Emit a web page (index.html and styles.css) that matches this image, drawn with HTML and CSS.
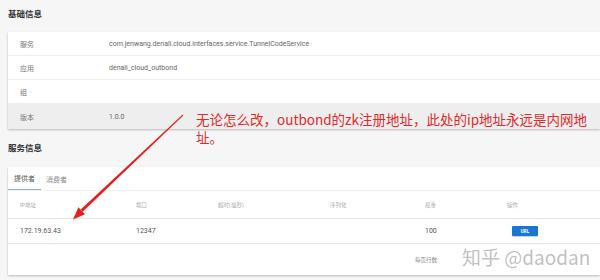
FILE: index.html
```html
<!DOCTYPE html>
<html lang="zh">
<head>
  <meta charset="UTF-8" />
  <title>服务详情</title>
  <link rel="stylesheet" href="styles.css">
</head>
<body>
  <div class="page">
    <h2 class="section-title">基础信息</h2>
    <section class="card info-card">
      <div class="info-row"><span class="info-label">服务</span><span>com.jenwang.denali.cloud.interfaces.service.TunnelCodeService</span></div>
      <div class="info-row"><span class="info-label">应用</span><span>denali_cloud_outbond</span></div>
      <div class="info-row"><span class="info-label">组</span><span></span></div>
      <div class="info-row is-active"><span class="info-label">版本</span><span>1.0.0</span></div>
    </section>

    <h2 class="section-title second">服务信息</h2>
    <section class="card service-card">
      <div class="tabs">
        <span class="tab is-current">提供者</span>
        <span class="tab">消费者</span>
      </div>
      <div class="grid-row head">
        <span>IP地址</span><span>端口</span><span>超时(毫秒)</span><span>序列化</span><span>权重</span><span>操作</span>
      </div>
      <div class="grid-row body">
        <span>172.19.63.43</span><span>12347</span><span></span><span></span><span>100</span><span><button class="btn-url">URL</button></span>
      </div>
      <div class="pager">每页行数:</div>
    </section>
  </div>

  <!-- annotation drawn over the screenshot -->
  <div class="note">无论怎么改，outbond的zk注册地址，此处的ip地址永远是内网地<br>址。</div>
  <svg class="arrow" width="600" height="280" viewBox="0 0 600 280">
    <polygon points="182.7,114.6 183.3,115.4 82.7,211.8 80.7,209.6" fill="#e3211c"/>
    <polygon points="73,219.5 85,214.2 78.4,207.2" fill="#e3211c"/>
  </svg>

  <div class="watermark">知乎 @daodan</div>
</body>
</html>
```

FILE: styles.css
```css
* {
  box-sizing: border-box;
}

body {
  margin: 0;
  width: 600px;
  height: 280px;
  overflow: hidden;
  background: #f6f6f6;
  color: #555;
  font-family: Roboto, "Noto Sans CJK SC", sans-serif;
  position: relative;
}

.page {
  padding-left: 8px;
}

.section-title {
  margin: 0 0 4px;
  height: 28px;
  line-height: 28px;
  font-size: 8.5px;
  font-weight: 700;
  color: #333;
}

.section-title.second {
  margin: 7px 0 7px;
  height: 24px;
  line-height: 24px;
}

.card {
  background: #fff;
  box-shadow: 0 1px 2px rgba(0, 0, 0, 0.25);
}

.info-row {
  display: grid;
  grid-template-columns: 89px 1fr;
  align-items: center;
  height: 24px;
  padding-left: 12px;
  border-bottom: 1px solid #ececec;
  font-size: 7px;
  color: #666;
}

.info-row:last-child {
  border-bottom: none;
  height: 25px;
}

.info-row.is-active {
  background: #eeeeee;
}

.info-label {
  color: #777;
}

.tabs {
  display: flex;
  height: 24px;
  border-bottom: 1px solid #f2f2f2;
}

.tab {
  display: flex;
  align-items: center;
  padding: 0 5px;
  font-size: 7px;
  color: #888;
}

.tab.is-current {
  width: 33px;
  justify-content: center;
  color: #555;
  border-bottom: 1.5px solid #93aecf;
}

.grid-row {
  display: grid;
  grid-template-columns: 116px 82px 112px 95px 82px 1fr;
  align-items: center;
  padding-left: 12px;
  border-bottom: 1px solid #e6e6e6;
}

.grid-row.head {
  height: 28px;
  font-size: 5.5px;
  color: #aaa;
}

.grid-row.body {
  height: 25px;
  font-size: 7px;
  color: #555;
}

.btn-url {
  margin-left: 5px;
  width: 26px;
  height: 10px;
  padding: 0;
  border: none;
  border-radius: 1px;
  background: #1976d2;
  color: #fff;
  font-family: Roboto, sans-serif;
  font-size: 4.5px;
  font-weight: 700;
  box-shadow: 0 1px 1px rgba(0, 0, 0, 0.2);
}

.pager {
  height: 31px;
  display: flex;
  align-items: center;
  padding-left: 407px;
  font-size: 5.5px;
  color: #888;
}

.note {
  position: absolute;
  left: 196px;
  top: 110px;
  font-family: "Noto Sans CJK SC", sans-serif;
  font-size: 13.5px;
  line-height: 18px;
  color: #e12b2b;
  white-space: nowrap;
}

.arrow {
  position: absolute;
  left: 0;
  top: 0;
}

.watermark {
  position: absolute;
  left: 462px;
  top: 244px;
  font-family: "Noto Sans CJK SC", sans-serif;
  font-size: 19px;
  line-height: 26px;
  color: rgba(140, 140, 140, 0.55);
  text-shadow: 0 0 1px #fff, 0 0 2px #fff;
  white-space: nowrap;
}
```
